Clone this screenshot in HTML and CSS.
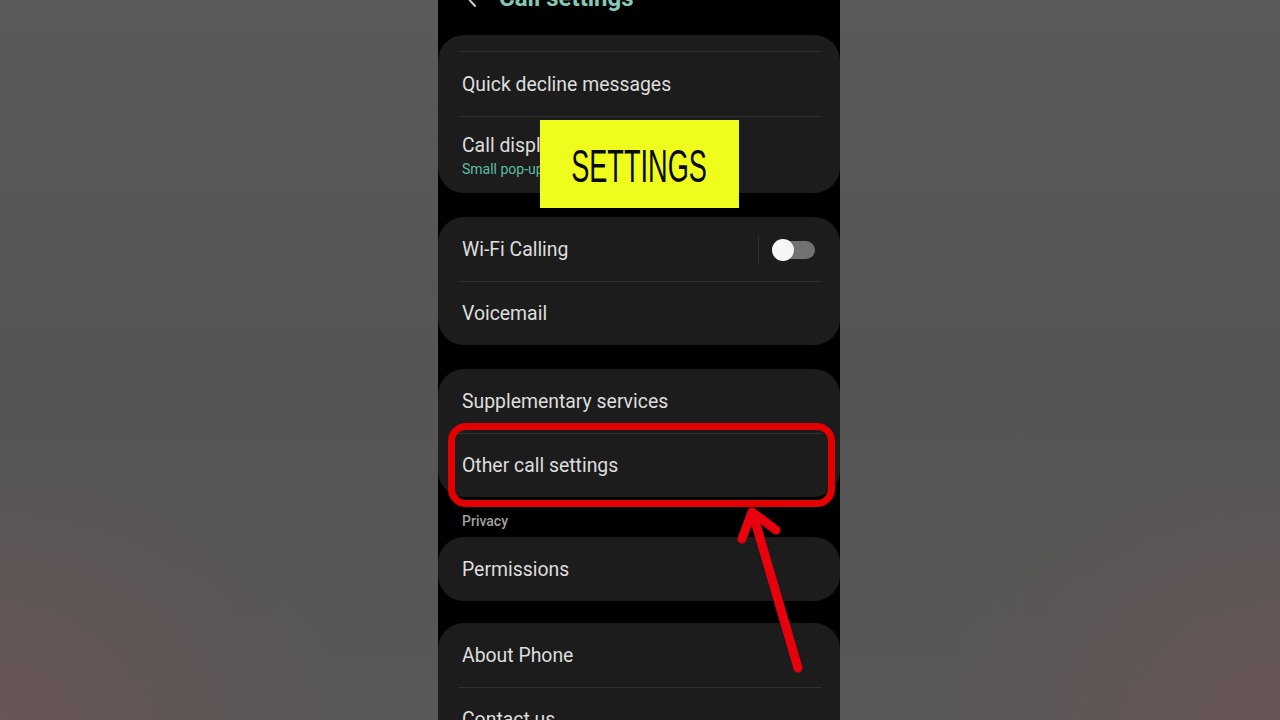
FILE: index.html
```html
<!DOCTYPE html>
<html lang="en">
<head>
<meta charset="utf-8">
<title>Call settings</title>
<link rel="stylesheet" href="styles.css">
</head>
<body>
<div class="stage">
  <div class="side"></div>
  <main class="phone">
    <header class="topbar">
      <svg class="back" width="14" height="24" viewBox="0 0 14 24"><path d="M11 2 L2 12 L11 22" fill="none" stroke="#cfcfcf" stroke-width="2" stroke-linecap="round" stroke-linejoin="round"/></svg>
      <h1 class="title">Call settings</h1>
    </header>

    <section class="card card-first">
      <div class="row"><span class="label">Quick decline messages</span></div>
      <div class="row row-sub">
        <span class="label">Call display while using apps</span>
        <span class="sub">Small pop-up</span>
      </div>
    </section>

    <section class="card">
      <div class="row row-toggle">
        <span class="label">Wi-Fi Calling</span>
        <span class="vsep"></span>
        <span class="toggle"><span class="knob"></span></span>
      </div>
      <div class="row"><span class="label">Voicemail</span></div>
    </section>

    <section class="card">
      <div class="row"><span class="label">Supplementary services</span></div>
      <div class="row"><span class="label">Other call settings</span></div>
    </section>

    <div class="section-label">Privacy</div>

    <section class="card card-tight">
      <div class="row"><span class="label">Permissions</span></div>
    </section>

    <section class="card">
      <div class="row"><span class="label">About Phone</span></div>
      <div class="row"><span class="label">Contact us</span></div>
    </section>

    <div class="highlight"></div>
    <svg class="arrow" width="402" height="720" viewBox="0 0 402 720">
      <g fill="none" stroke="#e8000c" stroke-width="9" stroke-linecap="round" stroke-linejoin="round">
        <path d="M360 668 L315 514"/>
        <path d="M304 539 L314 512 L338 530"/>
      </g>
    </svg>
    <div class="banner"><span class="banner-text">SETTINGS</span></div>
  </main>
  <div class="side"></div>
</div>
</body>
</html>
```

FILE: styles.css
```css
* { box-sizing: border-box; }
html, body {
  margin: 0;
  padding: 0;
  width: 1280px;
  height: 720px;
  overflow: hidden;
}
body {
  background:
    radial-gradient(ellipse 340px 280px at 0% 100%, rgba(115, 85, 85, 0.6), rgba(115, 85, 85, 0) 100%),
    radial-gradient(ellipse 340px 280px at 100% 100%, rgba(115, 85, 85, 0.6), rgba(115, 85, 85, 0) 100%),
    linear-gradient(to bottom, #5a5a5a 0%, #555555 50%, #595757 100%);
  font-family: Roboto, "Noto Sans", "Liberation Sans", sans-serif;
}
.stage {
  display: grid;
  grid-template-columns: 438px 402px 1fr;
  height: 720px;
}
.phone {
  position: relative;
  background: #000;
  height: 720px;
  overflow: hidden;
}
.topbar {
  display: flex;
  align-items: center;
  height: 32px;
  margin-top: -18px;
  margin-bottom: 21px;
  padding-left: 26px;
  gap: 21px;
}
.back { flex: none; margin-top: -4px; }
.title {
  margin: 0;
  font-size: 24px;
  line-height: 32px;
  font-weight: 700;
  color: #86c9b6;
}
.card {
  background: #1c1c1c;
  border-radius: 26px;
  margin-bottom: 24px;
  overflow: hidden;
}
.card-first {
  padding-top: 17px;
  position: relative;
}
.card-first::before {
  content: "";
  position: absolute;
  top: 16px;
  left: 20px;
  right: 18px;
  height: 1px;
  background: #303030;
}
.card-tight { margin-bottom: 22px; }
.row {
  height: 64px;
  display: flex;
  align-items: center;
  padding: 2px 24px 0;
  position: relative;
}
.row + .row::before {
  content: "";
  position: absolute;
  top: 0;
  left: 20px;
  right: 18px;
  height: 1px;
  background: #303030;
}
.row-sub {
  height: 77px;
  flex-direction: column;
  align-items: flex-start;
  justify-content: flex-start;
  padding-top: 18px;
}
.label {
  font-size: 19.4px;
  color: #dedede;
  line-height: 24px;
  white-space: nowrap;
}
.sub {
  font-size: 14px;
  line-height: 18px;
  color: #5cbca6;
  margin-top: 2px;
}
.row-toggle { justify-content: flex-start; }
.vsep {
  margin-left: auto;
  width: 1px;
  height: 30px;
  background: #2c2c2c;
}
.toggle {
  position: relative;
  width: 43px;
  height: 18px;
  margin-left: 13px;
  margin-right: 1px;
  border-radius: 9px;
  background: #727272;
}
.knob {
  position: absolute;
  left: 0;
  top: -2px;
  width: 22px;
  height: 22px;
  border-radius: 50%;
  background: #f6f6f6;
}
.section-label {
  margin-top: -9px;
  padding-left: 24px;
  height: 25px;
  font-size: 14px;
  line-height: 18px;
  font-weight: 500;
  color: #a0a0a0;
}
.highlight {
  position: absolute;
  left: 10px;
  top: 423px;
  width: 387px;
  height: 84px;
  border: 7px solid #e30000;
  border-radius: 18px;
}
.arrow {
  position: absolute;
  left: 0;
  top: 0;
  pointer-events: none;
}
.banner {
  position: absolute;
  left: 102px;
  top: 120px;
  width: 199px;
  height: 88px;
  background: #effd1d;
  display: flex;
  align-items: center;
  justify-content: center;
}
.banner-text {
  display: inline-block;
  font-family: "Liberation Sans Narrow", "Liberation Sans", sans-serif;
  font-size: 46px;
  line-height: 46px;
  font-weight: 400;
  color: #0a0a0a;
  transform: scaleX(0.59);
  margin-top: 3px;
}
```
